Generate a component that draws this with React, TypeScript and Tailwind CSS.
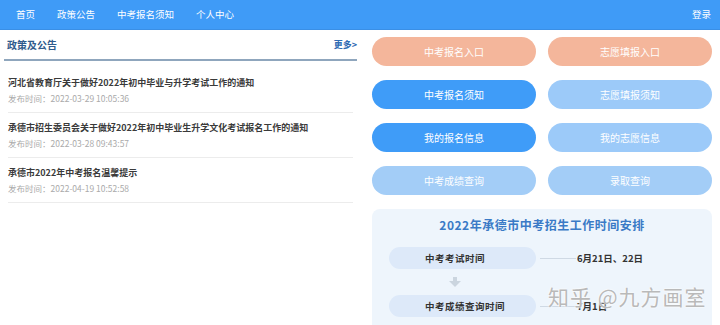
import React from 'react';

const navItems = ['首页', '政策公告', '中考报名须知', '个人中心'];

const notices = [
    { title: '河北省教育厅关于做好2022年初中毕业与升学考试工作的通知', time: '2022-03-29 10:05:36' },
    { title: '承德市招生委员会关于做好2022年初中毕业生升学文化考试报名工作的通知', time: '2022-03-28 09:43:57' },
    { title: '承德市2022年中考报名温馨提示', time: '2022-04-19 10:52:58' },
];

const buttons = [
    { label: '中考报名入口', cls: 'bg-[#f4b69b]' },
    { label: '志愿填报入口', cls: 'bg-[#f4b69b]' },
    { label: '中考报名须知', cls: 'bg-[#3f9cf8]' },
    { label: '志愿填报须知', cls: 'bg-[#9ccaf9]' },
    { label: '我的报名信息', cls: 'bg-[#3f9cf8]' },
    { label: '我的志愿信息', cls: 'bg-[#9ccaf9]' },
    { label: '中考成绩查询', cls: 'bg-[#a3cdf7]' },
    { label: '录取查询', cls: 'bg-[#a3cdf7]' },
];

const schedule = [
    { label: '中考考试时间', date: '6月21日、22日' },
    { label: '中考成绩查询时间', date: '7月1日' },
];

const ScheduleRow: React.FC<{ label: string; date: string }> = ({ label, date }) => (
    <div className="flex items-center">
        <div className="w-[147px] h-[22px] rounded-full bg-[#dde9f9] flex items-center pl-[36px] text-[9.5px] font-bold text-[#333] tracking-[0.5px]">
            {label}
        </div>
        <div className="w-[36px] h-px bg-[#cfd9e4] ml-[4px]" />
        <span className="ml-[1px] text-[9.5px] font-bold text-[#333]">{date}</span>
    </div>
);

export default function App() {
    return (
        <div className="w-[720px] h-[325px] overflow-hidden bg-white font-['Noto_Sans_CJK_SC','Noto_Sans',sans-serif]">
            {/* top nav */}
            <div className="h-[30px] bg-[#3f9bf7] border-b border-[#3a8fe6] flex items-center px-[16px] text-white text-[9.5px]">
                <div className="flex items-center gap-[22px]">
                    {navItems.map((n) => (
                        <span key={n}>{n}</span>
                    ))}
                </div>
                <span className="ml-auto mr-[-7px]">登录</span>
            </div>

            <div className="flex">
                {/* policies */}
                <div className="w-[353px] ml-[4px]">
                    <div className="h-[31px] flex items-center justify-between pl-[3px] border-b-2 border-[#8fa6bd]">
                        <span className="text-[10px] font-bold text-[#2f5b8c]">政策及公告</span>
                        <span className="text-[9px] font-bold text-[#2f6bb3]">更多&gt;</span>
                    </div>
                    <div className="mt-[7px] px-[4px]">
                        {notices.map((n) => (
                            <div key={n.time} className="pt-[8px] pb-[7px] border-b border-[#ececec]">
                                <div className="text-[9px] leading-[14px] font-bold text-[#3a3a3a] whitespace-nowrap">{n.title}</div>
                                <div className="text-[8.5px] leading-[14px] text-[#aaaaaa] mt-[1px]">发布时间：{n.time}</div>
                            </div>
                        ))}
                    </div>
                </div>

                {/* right column */}
                <div className="w-[340px] ml-[15px] pt-[7px]">
                    <div className="grid grid-cols-2 gap-x-[12px] gap-y-[14px]">
                        {buttons.map((b) => (
                            <div
                                key={b.label}
                                className={`h-[29px] rounded-full flex items-center justify-center text-white text-[10px] ${b.cls}`}
                            >
                                {b.label}
                            </div>
                        ))}
                    </div>

                    <div className="relative mt-[14px] h-[130px] rounded-[8px] bg-[#eef5fc] pl-[17px] pt-[7px]">
                        <div className="text-center text-[12px] leading-[18px] font-bold text-[#3a7ac6] pr-[17px] tracking-[0.5px]">
                            2022年承德市中考招生工作时间安排
                        </div>
                        <div className="mt-[13px]">
                            <ScheduleRow {...schedule[0]} />
                            <div className="w-[147px] h-[26px] flex items-center justify-center pr-[16px]">
                                <svg width="12" height="10" viewBox="0 0 12 10">
                                    <rect x="4" y="0" width="4" height="4" fill="#cbd5df" />
                                    <path d="M0 4 H12 L6 10 Z" fill="#cbd5df" />
                                </svg>
                            </div>
                            <ScheduleRow {...schedule[1]} />
                        </div>

                        <div className="absolute left-[176px] top-[72px] text-[21px] text-[#b9b9b9] tracking-[1px] [text-shadow:0_0_2px_#fff,0_0_2px_#fff] pointer-events-none">
                            知乎 @九方画室
                        </div>
                    </div>
                </div>
            </div>
        </div>
    );
}
